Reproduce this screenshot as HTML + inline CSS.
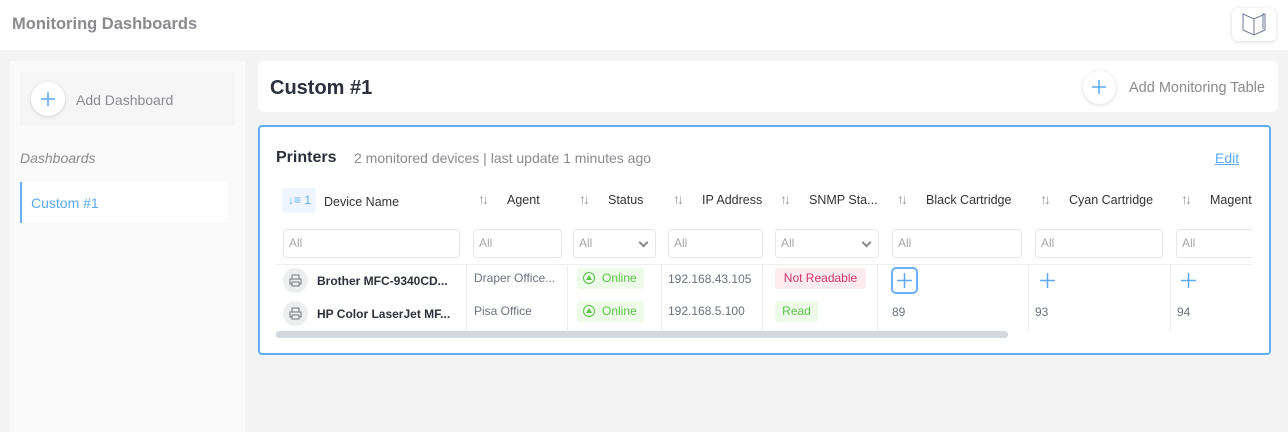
<!DOCTYPE html>
<html><head><meta charset="utf-8"><style>
*{box-sizing:border-box;margin:0;padding:0}
body{width:1288px;height:432px;overflow:hidden;background:#f4f4f4;font-family:"Liberation Sans",Arial,sans-serif;position:relative}
.a{position:absolute}
.t{white-space:nowrap}
.in{position:absolute;top:229px;height:29px;border:1px solid #e6e6e6;border-radius:4px;background:#fff;color:#a8a8a8;font-size:12px;line-height:27px;padding-left:5px}
.hd{position:absolute;top:193px;font-size:12.5px;color:#333;white-space:nowrap}
.ar{position:absolute;top:191px;font-size:14px;color:#999;letter-spacing:-3px}
.vl{position:absolute;top:265px;height:66px;width:1px;background:#eee}
.c{position:absolute;font-size:12px;color:#6b7280;white-space:nowrap}
.chev{position:absolute;right:8px;top:9px;width:7px;height:7px;border-right:2px solid #888;border-bottom:2px solid #888;transform:rotate(45deg)}
.on{position:absolute;height:21px;width:67px;background:#eefbe9;border-radius:3px;color:#5cc24a;font-size:12px;line-height:21px;padding-left:25px}
.on:before{content:"";position:absolute;left:6px;top:4px;width:10px;height:10px;border:1.5px solid #5cc24a;border-radius:50%}
.on:after{content:"";position:absolute;left:9px;top:7px;border-left:3.5px solid transparent;border-right:3.5px solid transparent;border-bottom:5px solid #5cc24a}
.pr{position:absolute;left:283px;width:25px;height:25px;border-radius:50%;background:#eceef0}
.pl{position:absolute}
</style></head><body>
<div class="a" style="left:0;top:0;width:1288px;height:50px;background:#fff"></div>
<div class="a t" style="left:12px;top:15px;font-size:16.5px;font-weight:bold;color:#8a8a90">Monitoring Dashboards</div>
<div class="a" style="left:1232px;top:8px;width:44px;height:33px;background:#fff;border-radius:6px;box-shadow:0 1px 4px rgba(0,0,0,.15)">
<svg width="44" height="33" viewBox="0 0 44 33"><g fill="none" stroke="#6e7a96" stroke-width="1"><path d="M11 6l11 5 11-5v16l-11 5-11-5z"/><path d="M22 11v16"/><path d="M31 5v16"/></g></svg></div>

<div class="a" style="left:10px;top:61px;width:235px;height:371px;background:#fafafa"></div>
<div class="a" style="left:20px;top:72px;width:215px;height:54px;background:#f6f6f6"></div>
<div class="a" style="left:31px;top:82px;width:34px;height:34px;border-radius:50%;background:#fff;box-shadow:0 1px 4px rgba(0,0,0,.15)"></div>
<svg class="pl" style="left:39px;top:90px" width="18" height="18"><path d="M9 2v14M2 9h14" stroke="#5aa9f4" stroke-width="1.5"/></svg>
<div class="a t" style="left:76px;top:92px;font-size:14px;color:#8a8a90">Add Dashboard</div>
<div class="a t" style="left:20px;top:150px;font-size:14px;color:#8a8a90;font-style:italic">Dashboards</div>
<div class="a" style="left:20px;top:182px;width:208px;height:41px;background:#fff;border-left:2px solid #6ab0f5"></div>
<div class="a t" style="left:31px;top:195px;font-size:14px;color:#5aa9f4">Custom #1</div>

<div class="a" style="left:258px;top:61px;width:1020px;height:51px;background:#fff;border-radius:6px"></div>
<div class="a t" style="left:270px;top:77px;font-size:20px;font-weight:bold;color:#2b303a">Custom #1</div>
<div class="a" style="left:1083px;top:71px;width:33px;height:33px;border-radius:50%;background:#fff;box-shadow:0 1px 4px rgba(0,0,0,.15)"></div>
<svg class="pl" style="left:1090px;top:78px" width="18" height="18"><path d="M9 2v14M2 9h14" stroke="#5aa9f4" stroke-width="1.5"/></svg>
<div class="a t" style="left:1129px;top:80px;font-size:14.5px;color:#8a8a90">Add Monitoring Table</div>

<div class="a" style="left:258px;top:125px;width:1013px;height:230px;background:#fff;border:2px solid #63aef6;border-radius:4px"></div>
<div class="a t" style="left:276px;top:149px;font-size:16px;font-weight:bold;color:#2b303a">Printers</div>
<div class="a t" style="left:354px;top:150px;font-size:14px;color:#8a8a90">2 monitored devices | last update 1 minutes ago</div>
<div class="a t" style="left:1215px;top:150px;font-size:14px;color:#5aa9f4;text-decoration:underline">Edit</div>

<div class="a" style="left:282px;top:188px;width:34px;height:25px;background:#eef5fe;border-radius:3px;color:#6ab0f5;font-size:12px;line-height:25px;padding-left:6px">↓≡ 1</div>
<div class="hd" style="left:324px;top:195px">Device Name</div>
<div class="ar" style="left:478px">↑↓</div><div class="hd" style="left:507px">Agent</div>
<div class="ar" style="left:579px">↑↓</div><div class="hd" style="left:608px">Status</div>
<div class="ar" style="left:673px">↑↓</div><div class="hd" style="left:702px">IP Address</div>
<div class="ar" style="left:780px">↑↓</div><div class="hd" style="left:809px">SNMP Sta...</div>
<div class="ar" style="left:897px">↑↓</div><div class="hd" style="left:926px">Black Cartridge</div>
<div class="ar" style="left:1040px">↑↓</div><div class="hd" style="left:1069px">Cyan Cartridge</div>
<div class="ar" style="left:1181px">↑↓</div><div class="hd" style="left:1210px">Magent</div>

<div class="in" style="left:283px;width:177px">All</div>
<div class="in" style="left:473px;width:89px">All</div>
<div class="in" style="left:573px;width:83px">All<div class="chev"></div></div>
<div class="in" style="left:668px;width:95px">All</div>
<div class="in" style="left:775px;width:104px">All<div class="chev"></div></div>
<div class="in" style="left:892px;width:130px">All</div>
<div class="in" style="left:1035px;width:128px">All</div>
<div class="in" style="left:1176px;width:76px;border-right:none;border-radius:4px 0 0 4px">All</div>

<div class="a" style="left:276px;top:264px;width:976px;height:1px;background:#eee"></div>
<div class="vl" style="left:466px"></div><div class="vl" style="left:567px"></div><div class="vl" style="left:661px"></div>
<div class="vl" style="left:762px"></div><div class="vl" style="left:877px"></div><div class="vl" style="left:1028px"></div><div class="vl" style="left:1170px"></div>

<div class="pr" style="top:268px"><svg width="25" height="25"><g fill="none" stroke="#777" stroke-width="1"><rect x="9" y="7" width="7" height="4"/><rect x="7" y="11" width="11" height="5"/><rect x="9" y="14" width="7" height="4" fill="#eceef0"/></g></svg></div>
<div class="pr" style="top:301px"><svg width="25" height="25"><g fill="none" stroke="#777" stroke-width="1"><rect x="9" y="7" width="7" height="4"/><rect x="7" y="11" width="11" height="5"/><rect x="9" y="14" width="7" height="4" fill="#eceef0"/></g></svg></div>
<div class="c" style="left:317px;top:274px;font-weight:bold;color:#2b303a">Brother MFC-9340CD...</div>
<div class="c" style="left:317px;top:307px;font-weight:bold;color:#2b303a">HP Color LaserJet MF...</div>
<div class="c" style="left:474px;top:271px">Draper Office...</div>
<div class="c" style="left:474px;top:304px">Pisa Office</div>
<div class="on" style="left:577px;top:268px">Online</div>
<div class="on" style="left:577px;top:301px">Online</div>
<div class="c" style="left:668px;top:272px">192.168.43.105</div>
<div class="c" style="left:668px;top:304px">192.168.5.100</div>
<div class="a t" style="left:775px;top:268px;width:91px;height:21px;background:#fcebef;border-radius:3px;color:#d0346a;font-size:12px;line-height:21px;text-align:center">Not Readable</div>
<div class="a t" style="left:775px;top:301px;width:43px;height:21px;background:#eefbe9;border-radius:3px;color:#5cc24a;font-size:12px;line-height:21px;text-align:center">Read</div>
<div class="a" style="left:891px;top:267px;width:27px;height:27px;border:2px solid #6ab0f5;border-radius:5px"></div>
<svg class="pl" style="left:896px;top:272px" width="17" height="17"><path d="M8.5 1v15M1 8.5h15" stroke="#5aa9f4" stroke-width="1.5"/></svg>
<svg class="pl" style="left:1039px;top:272px" width="17" height="17"><path d="M8.5 1v15M1 8.5h15" stroke="#5aa9f4" stroke-width="1.5"/></svg>
<svg class="pl" style="left:1180px;top:272px" width="17" height="17"><path d="M8.5 1v15M1 8.5h15" stroke="#5aa9f4" stroke-width="1.5"/></svg>
<div class="c" style="left:892px;top:305px">89</div>
<div class="c" style="left:1035px;top:305px">93</div>
<div class="c" style="left:1177px;top:305px">94</div>
<div class="a" style="left:276px;top:331px;width:732px;height:7px;background:#d4d9de;border-radius:3px"></div>
</body></html>
